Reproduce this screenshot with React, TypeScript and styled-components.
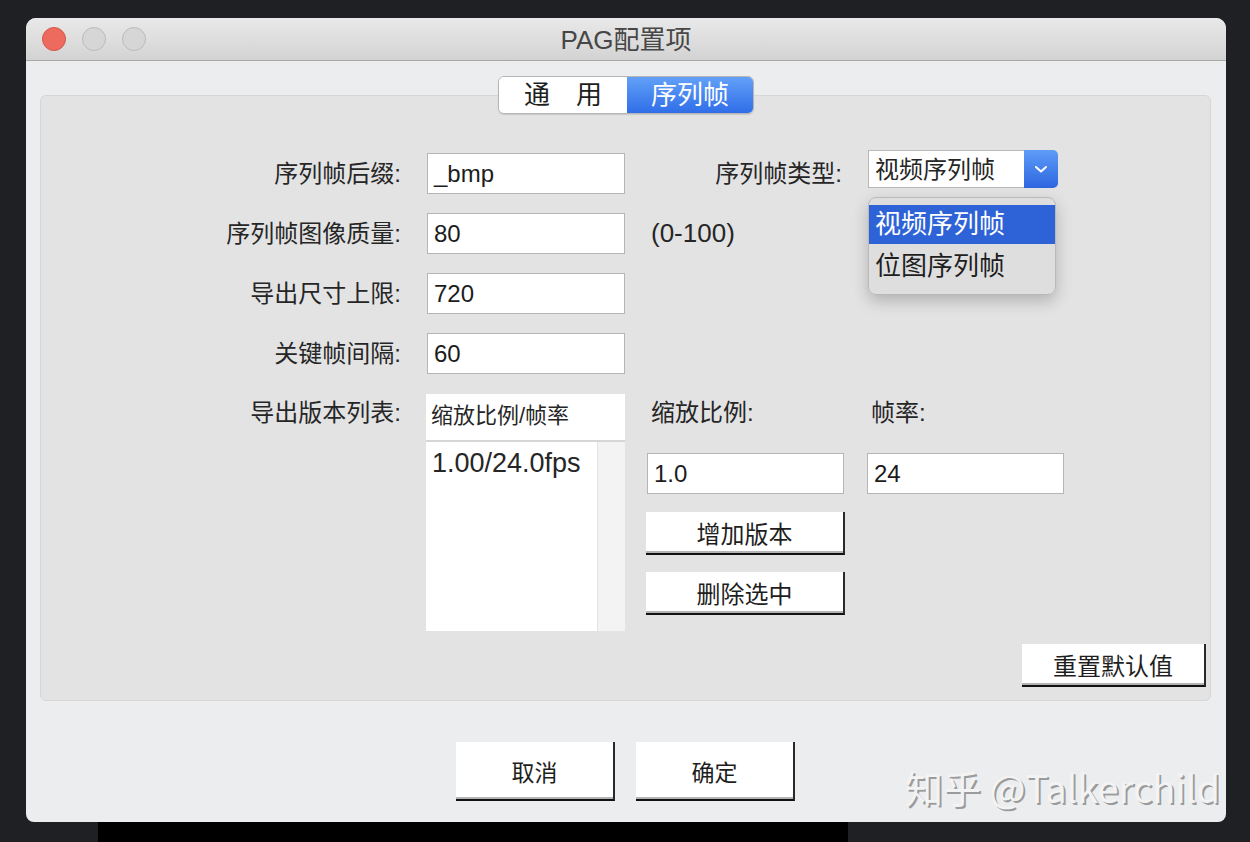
import styled, { createGlobalStyle } from "styled-components";

const GlobalStyle = createGlobalStyle`
  html, body {
    margin: 0;
    padding: 0;
    background: #1f2023;
  }
  body {
    width: 1250px;
    height: 842px;
    overflow: hidden;
    font-family: "Liberation Sans", "Noto Sans CJK SC", sans-serif;
    color: #262626;
  }
  * { box-sizing: border-box; }
`;

// 页面与窗口

const Page = styled.div`
  position: relative;
  width: 1250px;
  height: 842px;
  padding-top: 18px;
`;

const Window = styled.div`
  margin-left: 26px;
  width: 1200px;
  height: 804px;
  border-radius: 10px 10px 8px 8px;
  background: #ecedee;
  display: flex;
  flex-direction: column;
`;

const BackdropBar = styled.div`
  margin-left: 98px;
  width: 750px;
  height: 20px;
  background: #000;
`;

const TitleBar = styled.div`
  height: 43px;
  display: flex;
  align-items: center;
  border-radius: 10px 10px 0 0;
  background: linear-gradient(#e9e9e9, #d3d3d3);
  border-bottom: 1px solid #a8a8a8;
`;

const Lights = styled.div`
  width: 120px;
  display: flex;
  gap: 16px;
  padding-left: 16px;
`;

const Light = styled.span<{ $red?: boolean }>`
  width: 24px;
  height: 24px;
  border-radius: 50%;
  background: ${(p) => (p.$red ? "#ed6a5e" : "#d6d6d6")};
  border: 1px solid ${(p) => (p.$red ? "#d4574b" : "#bababa")};
`;

const Title = styled.div`
  flex: 1;
  text-align: center;
  font-size: 26px;
  color: #474747;
  line-height: 43px;
  padding-top: 2px;
`;

const Spacer = styled.div`
  width: 120px;
`;

const Body = styled.div`
  padding: 15px 15px 0 14px;
  display: flex;
  flex-direction: column;
`;

// 分段选项卡

const Tabs = styled.div`
  position: relative;
  z-index: 2;
  align-self: center;
  display: flex;
  height: 38px;
  margin-left: 1px;
  border: 1px solid #b6b6b6;
  border-radius: 6px;
  overflow: hidden;
  box-shadow: 0 1px 1px rgba(0, 0, 0, 0.12);
`;

const Tab = styled.div<{ $active?: boolean }>`
  width: ${(p) => (p.$active ? "126px" : "128px")};
  text-align: center;
  font-size: 26px;
  line-height: 36px;
  color: ${(p) => (p.$active ? "#fff" : "#1e1e1e")};
  background: ${(p) => (p.$active ? "linear-gradient(#62a0f8, #2f6ee8)" : "#fff")};
`;

const Panel = styled.div`
  margin-top: -19px;
  height: 606px;
  padding-top: 57px;
  border: 1px solid #d6d6d6;
  border-radius: 6px;
  background: #e3e3e4;
  display: flex;
  flex-direction: column;
`;

// 表单

const Rows = styled.div`
  display: flex;
  flex-direction: column;
  gap: 19px;
`;

const Row = styled.div`
  display: flex;
  align-items: center;
  height: 41px;
`;

const Label = styled.div<{ $width?: number }>`
  width: ${(p) => p.$width ?? 360}px;
  margin-right: 26px;
  text-align: right;
  font-size: 24px;
  line-height: 38px;
  white-space: nowrap;
`;

const Field = styled.div<{ $width?: number }>`
  width: ${(p) => p.$width ?? 198}px;
  height: 41px;
  padding: 0 6px;
  background: #fff;
  border: 1px solid #b5b5b5;
  font-size: 24px;
  line-height: 40px;
  color: #1c1c1c;
`;

const Hint = styled.div`
  margin-left: 26px;
  font-size: 26px;
  color: #262626;
`;

const SelectWrap = styled.div`
  position: relative;
  align-self: flex-start;
  margin-top: -3px;
  width: 190px;
  height: 38px;
  display: flex;
`;

const SelectValue = styled.div`
  flex: 1;
  background: #fff;
  border: 1px solid #b8b8b8;
  border-right: none;
  padding-left: 6px;
  font-size: 24px;
  line-height: 38px;
`;

const SelectButton = styled.div`
  width: 34px;
  border-radius: 0 5px 5px 0;
  background: linear-gradient(#5e9cf7, #2d66e0);
  display: flex;
  align-items: center;
  justify-content: center;
`;

const Menu = styled.div`
  position: absolute;
  z-index: 5;
  top: 47px;
  left: 0;
  width: 188px;
  height: 98px;
  padding-top: 7px;
  border: 1px solid #b9b9b9;
  border-radius: 8px;
  background: rgba(222, 222, 222, 0.97);
  box-shadow: 0 6px 16px rgba(0, 0, 0, 0.22);
`;

const MenuItem = styled.div<{ $selected?: boolean }>`
  height: ${(p) => (p.$selected ? 39 : 44)}px;
  padding-left: 6px;
  font-size: 26px;
  line-height: ${(p) => (p.$selected ? 39 : 44)}px;
  color: ${(p) => (p.$selected ? "#fff" : "#1e1e1e")};
  background: ${(p) => (p.$selected ? "#2e63d8" : "transparent")};
`;

// 导出版本列表

const VersionRow = styled.div`
  display: flex;
  align-items: flex-start;
  margin-top: 20px;
`;

const ListBox = styled.div`
  width: 199px;
  height: 237px;
  margin-left: -1px;
  display: flex;
  flex-direction: column;
`;

const ListHeader = styled.div`
  height: 48px;
  padding-left: 5px;
  background: #fff;
  border-bottom: 2px solid #d6d6d6;
  font-size: 22px;
  line-height: 44px;
`;

const ListBody = styled.div`
  flex: 1;
  display: flex;
`;

const ListItems = styled.div`
  flex: 1;
  background: #fff;
  padding: 6px 0 0 6px;
  font-size: 27px;
  line-height: 30px;
`;

const ScrollTrack = styled.div`
  width: 28px;
  background: #f3f3f3;
  border-left: 1px solid #e2e2e2;
`;

const Editor = styled.div`
  margin-left: 21px;
  display: grid;
  grid-template-columns: 198px 198px;
  column-gap: 22px;
  align-content: start;
`;

const EditorLabel = styled.div`
  padding-left: 5px;
  font-size: 24px;
  line-height: 38px;
`;

const EditorFields = styled.div`
  grid-column: 1 / 3;
  margin-top: 21px;
  display: grid;
  grid-template-columns: 197px 197px;
  column-gap: 23px;
  padding-left: 1px;
`;

const EditorButtons = styled.div`
  grid-column: 1 / 2;
  margin-top: 18px;
  display: flex;
  flex-direction: column;
  gap: 17px;
`;

const Button = styled.div<{ $width: number; $height: number }>`
  width: ${(p) => p.$width}px;
  height: ${(p) => p.$height}px;
  background: #fff;
  border-right: 2px solid #2a2a2a;
  border-bottom: 2px solid #111;
  box-shadow: inset 0 -2px 0 #b4b4b4;
  display: flex;
  align-items: center;
  justify-content: center;
  font-size: ${(p) => (p.$height > 50 ? 23 : 24)}px;
  color: #1e1e1e;
`;

const ResetRow = styled.div`
  margin-top: 13px;
  padding-right: 4px;
  display: flex;
  justify-content: flex-end;
`;

const Footer = styled.div`
  margin-top: 41px;
  display: flex;
  justify-content: center;
  gap: 21px;
`;

const Watermark = styled.div`
  position: absolute;
  left: 905px;
  top: 768px;
  font-family: "Noto Sans CJK SC", sans-serif;
  font-size: 38px;
  line-height: 1;
  color: #f3f3f3;
  text-shadow: 2px 2px 0 rgba(0, 0, 0, 0.35);
  white-space: nowrap;
`;

const Chevron = () => (
  <svg width="16" height="16" viewBox="0 0 16 16">
    <path d="M3 6 L8 10.5 L13 6" fill="none" stroke="#fff" strokeWidth="2" strokeLinecap="round" strokeLinejoin="round" />
  </svg>
);

const fields = [
  { label: "序列帧后缀:", value: "_bmp" },
  { label: "序列帧图像质量:", value: "80" },
  { label: "导出尺寸上限:", value: "720" },
  { label: "关键帧间隔:", value: "60" },
];

const App = () => {
  return (
    <Page>
      <GlobalStyle />
      <Window>
        <TitleBar>
          <Lights>
            <Light $red />
            <Light />
            <Light />
          </Lights>
          <Title>PAG配置项</Title>
          <Spacer />
        </TitleBar>
        <Body>
          <Tabs>
            <Tab>通　用</Tab>
            <Tab $active>序列帧</Tab>
          </Tabs>
          <Panel>
            <Rows>
              {fields.map((f, i) => (
                <Row key={f.label}>
                  <Label>{f.label}</Label>
                  <Field>{f.value}</Field>
                  {i === 0 && (
                    <>
                      <Label $width={217}>序列帧类型:</Label>
                      <SelectWrap>
                        <SelectValue>视频序列帧</SelectValue>
                        <SelectButton>
                          <Chevron />
                        </SelectButton>
                        <Menu>
                          <MenuItem $selected>视频序列帧</MenuItem>
                          <MenuItem>位图序列帧</MenuItem>
                        </Menu>
                      </SelectWrap>
                    </>
                  )}
                  {i === 1 && <Hint>(0-100)</Hint>}
                </Row>
              ))}
            </Rows>
            <VersionRow>
              <Label>导出版本列表:</Label>
              <ListBox>
                <ListHeader>缩放比例/帧率</ListHeader>
                <ListBody>
                  <ListItems>1.00/24.0fps</ListItems>
                  <ScrollTrack />
                </ListBody>
              </ListBox>
              <Editor>
                <EditorLabel>缩放比例:</EditorLabel>
                <EditorLabel>帧率:</EditorLabel>
                <EditorFields>
                  <Field $width={197}>1.0</Field>
                  <Field $width={197}>24</Field>
                </EditorFields>
                <EditorButtons>
                  <Button $width={199} $height={43}>增加版本</Button>
                  <Button $width={199} $height={43}>删除选中</Button>
                </EditorButtons>
              </Editor>
            </VersionRow>
            <ResetRow>
              <Button $width={184} $height={43}>重置默认值</Button>
            </ResetRow>
          </Panel>
          <Footer>
            <Button $width={159} $height={59}>取消</Button>
            <Button $width={159} $height={59}>确定</Button>
          </Footer>
        </Body>
      </Window>
      <BackdropBar />
      <Watermark>知乎 @Talkerchild</Watermark>
    </Page>
  );
};

export default App;
